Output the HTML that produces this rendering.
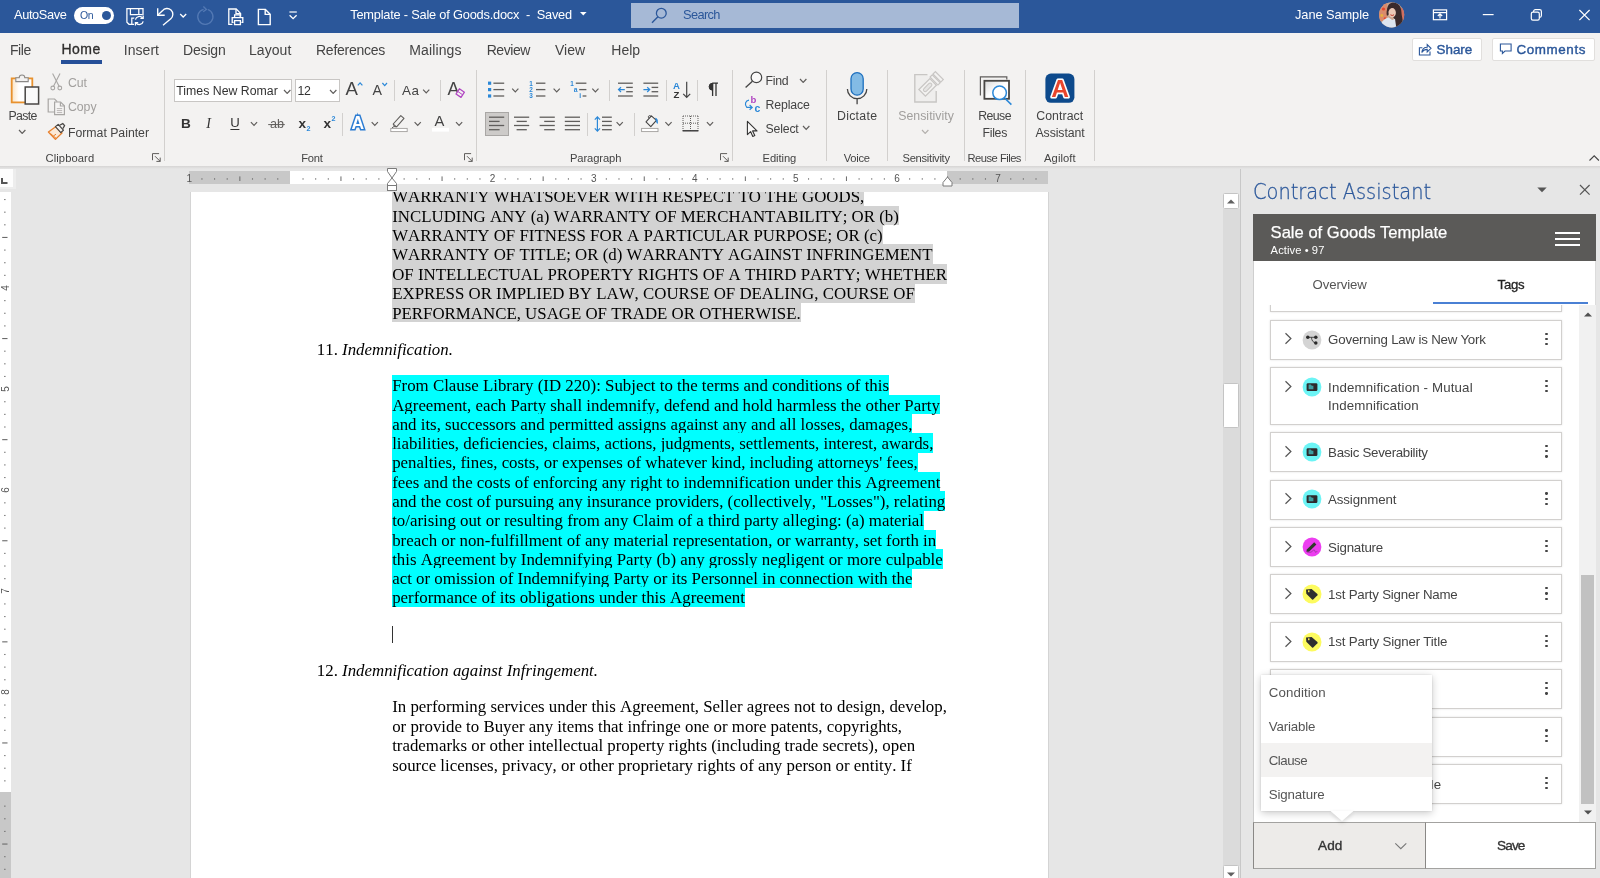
<!DOCTYPE html>
<html lang="en"><head><meta charset="utf-8"><title>Template - Sale of Goods.docx - Word</title>
<style>
html,body{margin:0;padding:0;overflow:hidden;}
body{width:1600px;height:878px;overflow:hidden;position:relative;background:#e6e6e6;font-family:"Liberation Sans",sans-serif;}
#root{position:absolute;left:0;top:0;width:1600px;height:878px;overflow:hidden;will-change:transform;}
.t{position:absolute;white-space:nowrap;line-height:1;}
.r{position:absolute;}
.ln{position:absolute;white-space:nowrap;font-family:"Liberation Serif",serif;font-size:16.85px;line-height:22px;height:19.4px;color:#000;font-kerning:none;font-variant-ligatures:none;}
.g{background:#d3d3d3;}
.c{background:#00ffff;}
</style></head>
<body>
<div id="root">
<!-- p_title -->
<div class="r" style="left:0.00px;top:0.00px;width:1600.00px;height:33.00px;background:#2b579a;"></div>
<div class="t" style="left:14.00px;top:8.96px;font-size:12.80px;color:#fff;letter-spacing:-0.376px;">AutoSave</div>
<div class="r" style="left:74.00px;top:6.50px;width:40.00px;height:17.00px;background:#fff;border-radius:9px;"></div>
<div class="t" style="left:80.00px;top:10.41px;font-size:10.50px;color:#2b579a;letter-spacing:-0.503px;">On</div>
<div class="r" style="left:101.50px;top:10.50px;width:9.00px;height:9.00px;background:#2b579a;border-radius:50%;"></div>
<div class="t" style="left:350.20px;top:8.96px;font-size:12.80px;color:#fff;letter-spacing:-0.205px;white-space:pre;">Template - Sale of Goods.docx  -  Saved</div>
<svg class="r" style="left:579.50px;top:12.20px;" width="7" height="4" viewBox="0 0 7 4"><path d="M0 0h6.6L3.3 3.6z" fill="#fff"/></svg>
<div class="r" style="left:631.00px;top:2.60px;width:387.50px;height:25.80px;background:#a6b9d6;"></div>
<svg class="r" style="left:651.00px;top:7.00px;" width="17" height="17" viewBox="0 0 17 17"><circle cx="10.3" cy="6.2" r="4.9" fill="none" stroke="#2b579a" stroke-width="1.3"/><path d="M6.9 9.8L1 15.8" stroke="#2b579a" stroke-width="1.4" fill="none"/></svg>
<div class="t" style="left:683.00px;top:9.06px;font-size:12.80px;color:#2b579a;letter-spacing:-0.626px;">Search</div>
<div class="t" style="left:1295.00px;top:8.96px;font-size:12.80px;color:#fff;letter-spacing:-0.065px;">Jane Sample</div>


<div class="r" style="left:0.00px;top:33.00px;width:1600.00px;height:132.50px;background:#f3f2f1;"></div>
<div class="r" style="left:0.00px;top:165.50px;width:1600.00px;height:3.00px;background:linear-gradient(#d6d5d4,#e6e6e6);"></div>
<div class="t" style="left:10.00px;top:42.55px;font-size:14.00px;color:#444;letter-spacing:-0.440px;">File</div>
<div class="t" style="left:61.40px;top:42.45px;font-size:14.00px;color:#2f2e2d;letter-spacing:0.513px;-webkit-text-stroke:0.32px #2f2e2d;">Home</div>
<div class="t" style="left:123.80px;top:42.55px;font-size:14.00px;color:#444;letter-spacing:0.031px;">Insert</div>
<div class="t" style="left:183.00px;top:42.55px;font-size:14.00px;color:#444;letter-spacing:-0.163px;">Design</div>
<div class="t" style="left:249.00px;top:42.55px;font-size:14.00px;color:#444;letter-spacing:0.061px;">Layout</div>
<div class="t" style="left:316.00px;top:42.55px;font-size:14.00px;color:#444;letter-spacing:-0.259px;">References</div>
<div class="t" style="left:409.20px;top:42.55px;font-size:14.00px;color:#444;letter-spacing:0.143px;">Mailings</div>
<div class="t" style="left:486.70px;top:42.55px;font-size:14.00px;color:#444;letter-spacing:-0.434px;">Review</div>
<div class="t" style="left:555.00px;top:42.55px;font-size:14.00px;color:#444;letter-spacing:-0.023px;">View</div>
<div class="t" style="left:611.30px;top:42.55px;font-size:14.00px;color:#444;letter-spacing:-0.024px;">Help</div>
<div class="r" style="left:61.20px;top:60.30px;width:40.60px;height:3.30px;background:#254f98;"></div>
<div class="r" style="left:1412.00px;top:38.00px;width:70.00px;height:23.00px;background:#fff;border:1px solid #e1dfdd;border-radius:2px;box-sizing:border-box;"></div>
<div class="r" style="left:1492.00px;top:38.00px;width:103.00px;height:23.00px;background:#fff;border:1px solid #e1dfdd;border-radius:2px;box-sizing:border-box;"></div>
<div class="t" style="left:1436.50px;top:42.96px;font-size:13.40px;color:#2b579a;letter-spacing:0.008px;-webkit-text-stroke:0.4px #2b579a;">Share</div>
<div class="t" style="left:1516.60px;top:42.96px;font-size:13.40px;color:#2b579a;letter-spacing:0.577px;-webkit-text-stroke:0.4px #2b579a;">Comments</div>
<svg class="r" style="left:0;top:0;" width="1600" height="66" viewBox="0 0 1600 66"><g fill="none" stroke="#fff" stroke-width="1.250"><path d="M134 24.300h-5l-2.100-2.100v-13.600h16.100v6.400"/><path d="M130.400 8.600v5.900h12.200"/><path d="M138.800 8.600v5.900"/><path d="M131.800 24.300v-6.300h2.600"/></g><circle cx="139.300" cy="20.500" r="5.300" fill="#2b579a"/><g fill="none" stroke="#fff" stroke-width="1.250"><path d="M135.400 19.600a4 4 0 0 1 7.200-1.400"/><path d="M143.200 15.600v2.800h-2.800"/><path d="M143.200 21.400a4 4 0 0 1-7.200 1.400"/><path d="M135.400 25.400v-2.800h2.800"/></g><g fill="none" stroke="#fff" stroke-width="1.350" stroke-linecap="butt"><path d="M157.700 8.200v7h7"/><path d="M157.900 15l4.500-4.200a5.800 5.800 0 1 1 8.400 7.900l-7.800 6.500"/></g><path d="M180.2 14l3 3l3-3" fill="none" stroke="#fff" stroke-width="1.3"/><g fill="none" stroke="#5379b4" stroke-width="1.3"><path d="M203.6 9.3a7.6 7.6 0 1 0 4.2 0.2"/><path d="M203.4 6.6l3 2.8l-3.2 2.4"/></g><g fill="none" stroke="#fff" stroke-width="1.3"><path d="M232.4 24.4h-3.6V9h7.4l4.4 4.4v3"/><path d="M236 9.2v4.4h4.4"/><path d="M233.6 22.4h-1.4v-4.8h10.6v4.8h-1.4"/><path d="M234.6 17.4v-2.6h5.6v2.6"/><path d="M234.6 20.6h5.8v4h-5.8z"/></g><g fill="none" stroke="#fff" stroke-width="1.4"><path d="M258.4 9.4h7l4.8 4.8v10.4h-11.8z"/><path d="M265.2 9.6v4.8h4.8"/></g><path d="M289.4 12h7.4" stroke="#fff" stroke-width="1.2" fill="none"/><path d="M289.6 15.2l3.5 3.5l3.5-3.5" fill="none" stroke="#fff" stroke-width="1.3"/><clipPath id="avc"><circle cx="1391.6" cy="14.8" r="12.6"/></clipPath><g clip-path="url(#avc)"><rect x="1378" y="1" width="28" height="28" fill="#c9a28c"/><rect x="1378" y="1" width="9" height="20" fill="#d98b6c"/><circle cx="1383.5" cy="9" r="1.6" fill="#e8452c"/><circle cx="1381.8" cy="15.5" r="1.4" fill="#e9b13c"/><circle cx="1385" cy="18.5" r="1.2" fill="#e8452c"/><rect x="1401" y="8" width="5" height="12" fill="#d06f60"/><path d="M1387.2 9.5c0.4-5.6 4-7.4 7.4-6.8c4.6 0.6 6.6 4.4 6.8 9c0.2 4.8 1.8 8.600 1.4 12c-2 3.600-6 4.400-9.400 4.200l0.800-9.400z" fill="#3b2a2b"/><path d="M1388 7.600c-1.600 2.200-1.800 6-1 8.400l2.200-2z" fill="#3b2a2b"/><ellipse cx="1392.200" cy="12.800" rx="3.700" ry="4.700" fill="#ecc8b6"/><path d="M1388.600 9.600c2-2.400 5.400-2.600 7.600-0.600l0.200-2.800l-6.400-0.400z" fill="#3b2a2b"/><path d="M1390.400 14.800q1.800 1.400 3.600 0" stroke="#c0392b" stroke-width="1" fill="none"/><path d="M1380 28c0.600-6 4-9.200 8.600-10.400l3.600 2.400l2.800-1.200l1.400 9.800z" fill="#dfe5ee"/></g><g fill="none" stroke="#fff" stroke-width="1.2"><rect x="1433.400" y="9.900" width="13.200" height="9.800"/><path d="M1433.400 12.600h13.200"/><path d="M1440 18.400v-4.200M1437.800 16l2.200-2.200l2.200 2.200"/><path d="M1482.800 14.600h10.800"/><rect x="1531.300" y="12.200" width="8" height="8" rx="1.600"/><path d="M1533.600 12v-0.600a1.800 1.800 0 0 1 1.800-1.800h4.200a1.800 1.800 0 0 1 1.800 1.800v4.200a1.800 1.800 0 0 1-1.800 1.800h-0.400"/><path d="M1579.400 10l10.200 10.200M1589.600 10l-10.200 10.200"/></g><g fill="none" stroke="#2b579a" stroke-width="1.1"><path d="M1422.400 47.800h-3v7.200h10.600v-3.600"/><path d="M1421.800 52.600c0.400-3.600 2.600-5.400 5.400-5.400v-2.600l3.800 3.700l-3.800 3.700v-2.600c-2.400-0.100-4.200 0.900-5.400 3.200z"/><path d="M1500.400 44h10.700v7h-6.100l-2.600 2.500v-2.500h-2z"/></g></svg>
<!-- p_ribbon -->
<div class="r" style="left:164.00px;top:70.00px;width:1.00px;height:91.00px;background:#d2d0ce;"></div>
<div class="r" style="left:475.50px;top:70.00px;width:1.00px;height:91.00px;background:#d2d0ce;"></div>
<div class="r" style="left:732.00px;top:70.00px;width:1.00px;height:91.00px;background:#d2d0ce;"></div>
<div class="r" style="left:825.50px;top:70.00px;width:1.00px;height:91.00px;background:#d2d0ce;"></div>
<div class="r" style="left:887.00px;top:70.00px;width:1.00px;height:91.00px;background:#d2d0ce;"></div>
<div class="r" style="left:964.00px;top:70.00px;width:1.00px;height:91.00px;background:#d2d0ce;"></div>
<div class="r" style="left:1024.50px;top:70.00px;width:1.00px;height:91.00px;background:#d2d0ce;"></div>
<div class="r" style="left:1094.00px;top:70.00px;width:1.00px;height:91.00px;background:#d2d0ce;"></div>
<div class="r" style="left:394.00px;top:80.00px;width:1.00px;height:21.00px;background:#d2d0ce;"></div>
<div class="r" style="left:440.00px;top:80.00px;width:1.00px;height:21.00px;background:#d2d0ce;"></div>
<div class="r" style="left:342.00px;top:113.00px;width:1.00px;height:23.00px;background:#d2d0ce;"></div>
<div class="r" style="left:609.00px;top:80.00px;width:1.00px;height:21.00px;background:#d2d0ce;"></div>
<div class="r" style="left:665.50px;top:80.00px;width:1.00px;height:21.00px;background:#d2d0ce;"></div>
<div class="r" style="left:697.00px;top:80.00px;width:1.00px;height:21.00px;background:#d2d0ce;"></div>
<div class="r" style="left:587.00px;top:113.00px;width:1.00px;height:23.00px;background:#d2d0ce;"></div>
<div class="r" style="left:633.50px;top:113.00px;width:1.00px;height:23.00px;background:#d2d0ce;"></div>
<div class="t" style="left:8.50px;top:110.09px;font-size:12.30px;color:#444;letter-spacing:-0.631px;">Paste</div>
<svg class="r" style="left:17.80px;top:128.80px;" width="8.4" height="5.4" viewBox="0 0 8.4 5.4"><path d="M1 1l3.20 3.40l3.20 -3.40" fill="none" stroke="#605e5c" stroke-width="1.20"/></svg>

<div class="t" style="left:68.00px;top:76.59px;font-size:12.30px;color:#a19f9d;letter-spacing:-0.114px;">Cut</div>

<div class="t" style="left:68.00px;top:100.79px;font-size:12.30px;color:#a19f9d;letter-spacing:-0.054px;">Copy</div>

<div class="t" style="left:68.00px;top:126.59px;font-size:12.30px;color:#444;letter-spacing:-0.025px;">Format Painter</div>
<div class="t" style="left:45.50px;top:152.52px;font-size:11.20px;color:#444;letter-spacing:0.095px;">Clipboard</div>

<div class="r" style="left:173.50px;top:78.70px;width:118.50px;height:23.50px;background:#fff;border:1px solid #c8c6c4;box-sizing:border-box;"></div>
<div class="r" style="left:294.60px;top:78.70px;width:45.20px;height:23.50px;background:#fff;border:1px solid #c8c6c4;box-sizing:border-box;"></div>
<div class="t" style="left:176.30px;top:85.09px;font-size:12.30px;color:#333;letter-spacing:0.008px;">Times New Romar</div>
<div class="t" style="left:297.50px;top:85.09px;font-size:12.30px;color:#333;letter-spacing:-0.441px;">12</div>
<svg class="r" style="left:282.50px;top:88.60px;" width="8.4" height="5.4" viewBox="0 0 8.4 5.4"><path d="M1 1l3.20 3.40l3.20 -3.40" fill="none" stroke="#605e5c" stroke-width="1.20"/></svg>
<svg class="r" style="left:329.00px;top:88.60px;" width="8.4" height="5.4" viewBox="0 0 8.4 5.4"><path d="M1 1l3.20 3.40l3.20 -3.40" fill="none" stroke="#605e5c" stroke-width="1.20"/></svg>


<div class="t" style="left:301.30px;top:152.52px;font-size:11.20px;color:#444;letter-spacing:-0.278px;">Font</div>

<div class="r" style="left:485.00px;top:112.00px;width:23.50px;height:24.30px;background:#cdcbc9;border:1px solid #a9a7a5;box-sizing:border-box;"></div>


<div class="t" style="left:570.00px;top:152.52px;font-size:11.20px;color:#444;letter-spacing:-0.112px;">Paragraph</div>


<div class="t" style="left:765.50px;top:74.59px;font-size:12.30px;color:#444;letter-spacing:-0.282px;">Find</div>
<svg class="r" style="left:799.10px;top:77.60px;" width="8.4" height="5.4" viewBox="0 0 8.4 5.4"><path d="M1 1l3.20 3.40l3.20 -3.40" fill="none" stroke="#605e5c" stroke-width="1.20"/></svg>
<div class="t" style="left:765.50px;top:99.09px;font-size:12.30px;color:#444;letter-spacing:-0.118px;">Replace</div>
<div class="t" style="left:765.50px;top:123.29px;font-size:12.30px;color:#444;letter-spacing:-0.181px;">Select</div>
<svg class="r" style="left:801.60px;top:125.30px;" width="8.4" height="5.4" viewBox="0 0 8.4 5.4"><path d="M1 1l3.20 3.40l3.20 -3.40" fill="none" stroke="#605e5c" stroke-width="1.20"/></svg>
<div class="t" style="left:762.50px;top:152.52px;font-size:11.20px;color:#444;letter-spacing:-0.064px;">Editing</div>

<div class="t" style="left:837.00px;top:110.09px;font-size:12.30px;color:#444;letter-spacing:0.288px;">Dictate</div>
<div class="t" style="left:843.70px;top:152.52px;font-size:11.20px;color:#444;letter-spacing:-0.280px;">Voice</div>

<div class="t" style="left:898.20px;top:110.09px;font-size:12.30px;color:#a19f9d;letter-spacing:0.039px;">Sensitivity</div>
<svg class="r" style="left:921.30px;top:128.80px;" width="8.4" height="5.4" viewBox="0 0 8.4 5.4"><path d="M1 1l3.20 3.40l3.20 -3.40" fill="none" stroke="#b3b0ad" stroke-width="1.20"/></svg>
<div class="t" style="left:902.50px;top:152.52px;font-size:11.20px;color:#444;letter-spacing:-0.283px;">Sensitivity</div>

<div class="t" style="left:978.20px;top:110.09px;font-size:12.30px;color:#444;letter-spacing:-0.551px;">Reuse</div>
<div class="t" style="left:982.50px;top:126.59px;font-size:12.30px;color:#444;letter-spacing:-0.294px;">Files</div>
<div class="t" style="left:967.50px;top:152.52px;font-size:11.20px;color:#444;letter-spacing:-0.512px;">Reuse Files</div>

<div class="t" style="left:1036.20px;top:110.09px;font-size:12.30px;color:#444;letter-spacing:0.077px;">Contract</div>
<div class="t" style="left:1035.50px;top:126.59px;font-size:12.30px;color:#444;letter-spacing:-0.100px;">Assistant</div>
<div class="t" style="left:1044.00px;top:152.52px;font-size:11.20px;color:#444;letter-spacing:0.096px;">Agiloft</div>
<svg class="r" style="left:1588.00px;top:154.00px;" width="12" height="8" viewBox="0 0 12 8"><path d="M1.5 6.5l4.7-4.7l4.7 4.7" fill="none" stroke="#444" stroke-width="1.1"/></svg>
<svg class="r" style="left:0;top:0;" width="1600" height="170" viewBox="0 0 1600 170"><defs><linearGradient id="pg" x1="0" y1="0" x2="1" y2="0"><stop offset="0" stop-color="#fbe3c2"/><stop offset="0.35" stop-color="#fff"/></linearGradient></defs><rect x="11.700" y="78.400" width="20.600" height="24" fill="url(#pg)" stroke="#e8912d" stroke-width="1.800"/><path d="M15.800 81.600v-3.800h3.400a2.800 2.800 0 0 1 5.600 0h3.400v3.800z" fill="#f3f2f1" stroke="#8a8886" stroke-width="1.100"/><rect x="25.200" y="87" width="13.400" height="17" fill="#fafafa" stroke="#484644" stroke-width="1.500"/><g fill="none" stroke="#a8a6a4" stroke-width="1.100"><path d="M52.600 73.600l6.600 12.800"/><path d="M60 73.600l-6.600 12.800"/><circle cx="52.800" cy="88" r="1.900"/><circle cx="59.800" cy="88" r="1.900"/></g><g fill="#f3f2f1" stroke="#a8a6a4" stroke-width="1.200"><path d="M54 112h-5.800v-13h6.400l2.600 2.600"/><path d="M54.600 102h6l3.800 3.800v8.800h-9.800z" fill="#f6f5f4"/><path d="M60.400 102.200v3.800h3.800" fill="none"/><path d="M56.800 108.600h5.400M56.800 110.600h5.400M56.800 112.600h5.400" stroke-width="0.800"/></g><path d="M48.400 132l7.600-5.600l6 6.600l-6.600 6.400z" fill="#fbe9d6" stroke="#e8812d" stroke-width="1.300" stroke-linejoin="round"/><path d="M50.600 133.600l5.800 5M53.400 136l2.600-1.800" stroke="#e8812d" stroke-width="1" fill="none"/><path d="M55.400 126.600l2.800-2.200l5.200 5.800l-2.600 2.400z" fill="#f3f2f1" stroke="#484644" stroke-width="1.200" stroke-linejoin="round"/><path d="M59.600 125.200l3.200-1.600l1.800 2l-1.800 3" fill="none" stroke="#484644" stroke-width="1.200"/><g fill="none" stroke="#605e5c" stroke-width="1"><path d="M152.50 160.20v-6.600h6.600"/><path d="M155.00 156.20l5.200 5.200"/><path d="M160.20 157.60v3.800h-3.800"/></g><text x="345.60" y="95.20" font-family="'Liberation Sans',sans-serif" font-size="18.60" fill="#444" text-anchor="start">A</text><path d="M357.800 85.400l2.300-2.600l2.300 2.600" fill="none" stroke="#2b88d8" stroke-width="1.200"/><text x="372.60" y="95.20" font-family="'Liberation Sans',sans-serif" font-size="14.20" fill="#444" text-anchor="start">A</text><path d="M382.400 83l2.300 2.600l2.300-2.600" fill="none" stroke="#2b88d8" stroke-width="1.200"/><text x="402.00" y="95.20" font-family="'Liberation Sans',sans-serif" font-size="13.40" fill="#444" text-anchor="start" letter-spacing="0.6">Aa</text><path d="M423.10 89.70l3.10 3.20l3.10 -3.20" fill="none" stroke="#605e5c" stroke-width="1.20"/><text x="447.40" y="94.80" font-family="'Liberation Sans',sans-serif" font-size="17.80" fill="#444" text-anchor="start">A</text><path d="M459.400 88.800l5 3.400l-3.400 5.200l-5-3.400z" fill="#f3f2f1" stroke="#b146c2" stroke-width="1.300" stroke-linejoin="round"/><path d="M457.400 91.200l5 3.400" stroke="#b146c2" stroke-width="1" fill="none"/><text x="181.00" y="127.50" font-family="'Liberation Sans',sans-serif" font-size="13.60" fill="#333" font-weight="700" text-anchor="start">B</text><text x="206.20" y="127.50" font-family="'Liberation Serif',serif" font-size="14.00" fill="#333" font-style="italic" text-anchor="start">I</text><text x="230.20" y="127.30" font-family="'Liberation Sans',sans-serif" font-size="13.20" fill="#333" text-anchor="start">U</text><path d="M230.400 129.500h9" stroke="#333" stroke-width="1" fill="none"/><path d="M250.90 122.20l3.10 3.20l3.10 -3.20" fill="none" stroke="#605e5c" stroke-width="1.20"/><text x="270.00" y="127.50" font-family="'Liberation Sans',sans-serif" font-size="12.60" fill="#605e5c" text-anchor="start">ab</text><path d="M268.200 124.600h16.600" stroke="#605e5c" stroke-width="1" fill="none"/><text x="298.60" y="127.50" font-family="'Liberation Sans',sans-serif" font-size="13.60" fill="#333" font-weight="700" text-anchor="start">x</text><text x="306.40" y="131.00" font-family="'Liberation Sans',sans-serif" font-size="7.20" fill="#2b88d8" font-weight="700" text-anchor="start">2</text><text x="323.40" y="127.50" font-family="'Liberation Sans',sans-serif" font-size="13.60" fill="#333" font-weight="700" text-anchor="start">x</text><text x="331.40" y="121.40" font-family="'Liberation Sans',sans-serif" font-size="7.20" fill="#2b88d8" font-weight="700" text-anchor="start">2</text><text x="351.400" y="129" font-family="'Liberation Sans',sans-serif" font-size="17.500" font-weight="700" fill="#fff" stroke="#2b7cd3" stroke-width="3" paint-order="stroke">A</text><path d="M371.70 122.20l3.10 3.20l3.10 -3.20" fill="none" stroke="#605e5c" stroke-width="1.20"/><path d="M394.600 126.600l-1.400-2.600l7.600-8.400l3.200 2.800l-7.200 8.200z" fill="#f3f2f1" stroke="#605e5c" stroke-width="1.100" stroke-linejoin="round"/><path d="M393.200 124l3.400 2.800M392 127.800l2.200-1.400" stroke="#605e5c" stroke-width="1" fill="none"/><rect x="390.800" y="128.400" width="16.400" height="3.200" fill="#fff" stroke="#a19f9d" stroke-width="0.900"/><path d="M414.60 122.20l3.10 3.20l3.10 -3.20" fill="none" stroke="#605e5c" stroke-width="1.20"/><text x="434.60" y="126.40" font-family="'Liberation Sans',sans-serif" font-size="14.80" fill="#444" text-anchor="start">A</text><rect x="432" y="127.800" width="17" height="3.800" fill="#fff"/><path d="M456.00 122.20l3.10 3.20l3.10 -3.20" fill="none" stroke="#605e5c" stroke-width="1.20"/><g fill="none" stroke="#605e5c" stroke-width="1"><path d="M464.50 160.20v-6.600h6.600"/><path d="M467.00 156.20l5.200 5.200"/><path d="M472.20 157.60v3.800h-3.800"/></g><rect x="488" y="81.60" width="3.200" height="3.200" fill="#2b88d8"/><path d="M493.40 83.20H504.20" stroke="#605e5c" stroke-width="1.30" fill="none"/><rect x="488" y="88.00" width="3.200" height="3.200" fill="#2b88d8"/><path d="M493.40 89.60H504.20" stroke="#605e5c" stroke-width="1.30" fill="none"/><rect x="488" y="94.40" width="3.200" height="3.200" fill="#2b88d8"/><path d="M493.40 96.00H504.20" stroke="#605e5c" stroke-width="1.30" fill="none"/><path d="M512.20 88.70l3.10 3.20l3.10 -3.20" fill="none" stroke="#605e5c" stroke-width="1.20"/><text x="529.20" y="85.50" font-family="'Liberation Sans',sans-serif" font-size="6.40" fill="#2b88d8" font-weight="700" text-anchor="start">1</text><path d="M536.00 83.20H545.40" stroke="#605e5c" stroke-width="1.30" fill="none"/><text x="529.20" y="91.90" font-family="'Liberation Sans',sans-serif" font-size="6.40" fill="#2b88d8" font-weight="700" text-anchor="start">2</text><path d="M536.00 89.60H545.40" stroke="#605e5c" stroke-width="1.30" fill="none"/><text x="529.20" y="98.30" font-family="'Liberation Sans',sans-serif" font-size="6.40" fill="#2b88d8" font-weight="700" text-anchor="start">3</text><path d="M536.00 96.00H545.40" stroke="#605e5c" stroke-width="1.30" fill="none"/><path d="M553.60 88.70l3.10 3.20l3.10 -3.20" fill="none" stroke="#605e5c" stroke-width="1.20"/><text x="570.20" y="85.50" font-family="'Liberation Sans',sans-serif" font-size="6.40" fill="#2b88d8" font-weight="700" text-anchor="start">1</text><path d="M575.80 83.20H586.40" stroke="#605e5c" stroke-width="1.30" fill="none"/><text x="573.80" y="91.80" font-family="'Liberation Sans',sans-serif" font-size="6.80" fill="#2b88d8" font-weight="700" text-anchor="start">a</text><path d="M579.20 89.60H586.40" stroke="#605e5c" stroke-width="1.30" fill="none"/><text x="579.20" y="98.30" font-family="'Liberation Sans',sans-serif" font-size="6.80" fill="#2b88d8" font-weight="700" text-anchor="start">i</text><path d="M582.60 96.00H586.40" stroke="#605e5c" stroke-width="1.30" fill="none"/><path d="M592.30 88.70l3.10 3.20l3.10 -3.20" fill="none" stroke="#605e5c" stroke-width="1.20"/><path d="M618.00 83.20H632.80" stroke="#605e5c" stroke-width="1.30" fill="none"/><path d="M618.00 96.00H632.80" stroke="#605e5c" stroke-width="1.30" fill="none"/><path d="M626.20 87.40H632.80" stroke="#605e5c" stroke-width="1.30" fill="none"/><path d="M626.20 91.70H632.80" stroke="#605e5c" stroke-width="1.30" fill="none"/><path d="M624.800 89.600h-6.200M621 87.200l-2.500 2.400l2.500 2.400" stroke="#2b88d8" stroke-width="1.200" fill="none"/><path d="M643.40 83.20H658.20" stroke="#605e5c" stroke-width="1.30" fill="none"/><path d="M643.40 96.00H658.20" stroke="#605e5c" stroke-width="1.30" fill="none"/><path d="M651.60 87.40H658.20" stroke="#605e5c" stroke-width="1.30" fill="none"/><path d="M651.60 91.70H658.20" stroke="#605e5c" stroke-width="1.30" fill="none"/><path d="M643.400 89.600h6.200M647.200 87.200l2.500 2.400l-2.500 2.400" stroke="#2b88d8" stroke-width="1.200" fill="none"/><text x="673.00" y="88.80" font-family="'Liberation Sans',sans-serif" font-size="9.60" fill="#2b88d8" font-weight="700" text-anchor="start">A</text><text x="673.40" y="98.00" font-family="'Liberation Sans',sans-serif" font-size="9.60" fill="#333" font-weight="700" text-anchor="start">Z</text><path d="M686.700 81.800v15.400M683.200 93.800l3.500 3.600l3.500-3.600" stroke="#444" stroke-width="1.200" fill="none"/><path d="M712.400 83.200h5.600M712.600 83.200v12.800M716 83.200v12.800" stroke="#333" stroke-width="1.300" fill="none"/><path d="M712.600 83.200a3.500 3.500 0 0 0 0 7z" fill="#333" stroke="#333" stroke-width="1"/><path d="M489.00 117.20H504.20" stroke="#605e5c" stroke-width="1.30" fill="none"/><path d="M514.00 117.20H529.20" stroke="#605e5c" stroke-width="1.30" fill="none"/><path d="M539.60 117.20H554.80" stroke="#605e5c" stroke-width="1.30" fill="none"/><path d="M564.80 117.20H580.00" stroke="#605e5c" stroke-width="1.30" fill="none"/><path d="M602.00 117.20H611.80" stroke="#605e5c" stroke-width="1.30" fill="none"/><path d="M489.00 121.40H499.60" stroke="#605e5c" stroke-width="1.30" fill="none"/><path d="M516.60 121.40H526.80" stroke="#605e5c" stroke-width="1.30" fill="none"/><path d="M544.20 121.40H554.80" stroke="#605e5c" stroke-width="1.30" fill="none"/><path d="M564.80 121.40H580.00" stroke="#605e5c" stroke-width="1.30" fill="none"/><path d="M602.00 121.40H611.80" stroke="#605e5c" stroke-width="1.30" fill="none"/><path d="M489.00 125.50H504.20" stroke="#605e5c" stroke-width="1.30" fill="none"/><path d="M514.00 125.50H529.20" stroke="#605e5c" stroke-width="1.30" fill="none"/><path d="M539.60 125.50H554.80" stroke="#605e5c" stroke-width="1.30" fill="none"/><path d="M564.80 125.50H580.00" stroke="#605e5c" stroke-width="1.30" fill="none"/><path d="M602.00 125.50H611.80" stroke="#605e5c" stroke-width="1.30" fill="none"/><path d="M489.00 129.70H499.60" stroke="#605e5c" stroke-width="1.30" fill="none"/><path d="M516.60 129.70H526.80" stroke="#605e5c" stroke-width="1.30" fill="none"/><path d="M544.20 129.70H554.80" stroke="#605e5c" stroke-width="1.30" fill="none"/><path d="M564.80 129.70H580.00" stroke="#605e5c" stroke-width="1.30" fill="none"/><path d="M602.00 129.70H611.80" stroke="#605e5c" stroke-width="1.30" fill="none"/><path d="M597.400 117v14M594.800 119.600l2.600-2.700l2.600 2.700M594.800 128.400l2.600 2.700l2.600-2.700" stroke="#2b88d8" stroke-width="1.200" fill="none"/><path d="M616.60 122.20l3.10 3.20l3.10 -3.20" fill="none" stroke="#605e5c" stroke-width="1.20"/><path d="M646 121.800l5.400-6l5 4.600l-5.600 6.200z" fill="#f3f2f1" stroke="#444" stroke-width="1.100" stroke-linejoin="round"/><path d="M651 116.400c-1.800-1.800-3.400 0-2.200 1.800" fill="none" stroke="#444" stroke-width="1"/><path d="M655.600 118.200c1.600 0.400 2.200 2.200 1.800 5.200c-1-1.200-1.200-3-1.800-5.200z" fill="#2b88d8" stroke="#2b88d8" stroke-width="0.800"/><rect x="641.600" y="128.400" width="16.400" height="3.200" fill="#fff" stroke="#a19f9d" stroke-width="0.900"/><path d="M665.40 122.20l3.10 3.20l3.10 -3.20" fill="none" stroke="#605e5c" stroke-width="1.20"/><g fill="none" stroke="#605e5c" stroke-width="1" stroke-dasharray="1 1"><path d="M683 116h15M683 116v14.600M698 116v14.600M690.500 116v14.600M683 123.200h15"/></g><path d="M682.60 130.80H698.40" stroke="#333" stroke-width="1.40" fill="none"/><path d="M706.90 122.20l3.10 3.20l3.10 -3.20" fill="none" stroke="#605e5c" stroke-width="1.20"/><g fill="none" stroke="#605e5c" stroke-width="1"><path d="M720.50 160.20v-6.600h6.600"/><path d="M723.00 156.20l5.200 5.200"/><path d="M728.20 157.60v3.800h-3.800"/></g><circle cx="756.400" cy="77.400" r="5.300" fill="#faf9f8" stroke="#444" stroke-width="1.200"/><path d="M752.400 81.200l-6.800 6.200" stroke="#444" stroke-width="1.300" fill="none"/><text x="750.40" y="103.40" font-family="'Liberation Sans',sans-serif" font-size="9.60" fill="#b146c2" font-weight="700" text-anchor="start">b</text><text x="754.60" y="112.40" font-family="'Liberation Sans',sans-serif" font-size="10.40" fill="#2b88d8" font-weight="700" text-anchor="start">c</text><path d="M749 100.200c-3.600 0.400-4.800 4.200-2.200 7.200h5.200M749.600 105l2.600 2.400l-2.600 2.400" fill="none" stroke="#2b88d8" stroke-width="1.200"/><path d="M747.400 121.400v13.200l3.200-3l2.200 4.800l2-0.900l-2.200-4.600h4.400z" fill="#faf9f8" stroke="#333" stroke-width="1.100" stroke-linejoin="round"/><rect x="851" y="72.600" width="12.200" height="22.600" rx="6.100" fill="#83bbe5" stroke="#1e70bf" stroke-width="1.300"/><path d="M847.400 89a9.600 9.600 0 0 0 19.400 0M857.100 98.600v5.600" fill="none" stroke="#444" stroke-width="1.300"/><path d="M927.400 74.600h-12.600v27.400h21.400v-11" fill="#efeeed" stroke="#c8c6c4" stroke-width="1.400"/><g transform="rotate(-45 931 84)"><rect x="918.500" y="79.400" width="15.500" height="9.200" fill="#f3f2f1" stroke="#c8c6c4" stroke-width="1.300"/><rect x="921" y="82.200" width="10.500" height="3.600" rx="1.800" fill="#e6e5e4" stroke="#c8c6c4" stroke-width="1"/><rect x="935.200" y="78.400" width="3.200" height="11.200" fill="#f3f2f1" stroke="#c8c6c4" stroke-width="1.200"/><rect x="939.400" y="78.400" width="3.400" height="11.200" fill="#f3f2f1" stroke="#c8c6c4" stroke-width="1.200"/></g><path d="M980.400 95.600v-18.800h26.400v2.600" fill="none" stroke="#605e5c" stroke-width="1.200"/><defs><linearGradient id="rg" x1="0" y1="0" x2="1" y2="1"><stop offset="0" stop-color="#d8d8d8"/><stop offset="0.5" stop-color="#fff"/></linearGradient></defs><rect x="984.400" y="80.800" width="24.600" height="18" fill="url(#rg)" stroke="#484644" stroke-width="1.800"/><path d="M1004.800 98.200l6.600 6.400" stroke="#2b88d8" stroke-width="1.600" fill="none"/><circle cx="999.600" cy="92.800" r="6.800" fill="#fff" stroke="#2b88d8" stroke-width="1.500"/><rect x="1045.400" y="73.600" width="29" height="29.200" rx="5.500" fill="#0d4a8c"/><text x="1060" y="97.200" text-anchor="middle" font-family="'Liberation Sans',sans-serif" font-size="24.500" font-weight="700" fill="#e8452c" stroke="#fff" stroke-width="3.200" paint-order="stroke" stroke-linejoin="round">A</text></svg>
<!-- p_doc -->
<div class="r" style="left:188.70px;top:170.60px;width:859.60px;height:13.80px;background:#c8c8c8;"></div>
<div class="r" style="left:290.40px;top:170.60px;width:656.40px;height:13.80px;background:#fff;"></div>
<svg class="r" style="left:188.00px;top:170.60px;" width="862" height="14" viewBox="0 0 862 14"><rect x="13.39" y="7.3" width="1.1" height="1.3" fill="#6a6a6a"/><rect x="26.02" y="7.3" width="1.1" height="1.3" fill="#6a6a6a"/><rect x="38.66" y="7.3" width="1.1" height="1.3" fill="#6a6a6a"/><rect x="51.35" y="5.4" width="1" height="4.6" fill="#6a6a6a"/><rect x="63.94" y="7.3" width="1.1" height="1.3" fill="#6a6a6a"/><rect x="76.58" y="7.3" width="1.1" height="1.3" fill="#6a6a6a"/><rect x="89.21" y="7.3" width="1.1" height="1.3" fill="#6a6a6a"/><rect x="114.49" y="7.3" width="1.1" height="1.3" fill="#6a6a6a"/><rect x="127.12" y="7.3" width="1.1" height="1.3" fill="#6a6a6a"/><rect x="139.76" y="7.3" width="1.1" height="1.3" fill="#6a6a6a"/><rect x="152.45" y="5.4" width="1" height="4.6" fill="#6a6a6a"/><rect x="165.04" y="7.3" width="1.1" height="1.3" fill="#6a6a6a"/><rect x="177.67" y="7.3" width="1.1" height="1.3" fill="#6a6a6a"/><rect x="190.31" y="7.3" width="1.1" height="1.3" fill="#6a6a6a"/><rect x="215.59" y="7.3" width="1.1" height="1.3" fill="#6a6a6a"/><rect x="228.22" y="7.3" width="1.1" height="1.3" fill="#6a6a6a"/><rect x="240.86" y="7.3" width="1.1" height="1.3" fill="#6a6a6a"/><rect x="253.55" y="5.4" width="1" height="4.6" fill="#6a6a6a"/><rect x="266.14" y="7.3" width="1.1" height="1.3" fill="#6a6a6a"/><rect x="278.77" y="7.3" width="1.1" height="1.3" fill="#6a6a6a"/><rect x="291.41" y="7.3" width="1.1" height="1.3" fill="#6a6a6a"/><rect x="316.69" y="7.3" width="1.1" height="1.3" fill="#6a6a6a"/><rect x="329.32" y="7.3" width="1.1" height="1.3" fill="#6a6a6a"/><rect x="341.96" y="7.3" width="1.1" height="1.3" fill="#6a6a6a"/><rect x="354.65" y="5.4" width="1" height="4.6" fill="#6a6a6a"/><rect x="367.24" y="7.3" width="1.1" height="1.3" fill="#6a6a6a"/><rect x="379.87" y="7.3" width="1.1" height="1.3" fill="#6a6a6a"/><rect x="392.51" y="7.3" width="1.1" height="1.3" fill="#6a6a6a"/><rect x="417.79" y="7.3" width="1.1" height="1.3" fill="#6a6a6a"/><rect x="430.42" y="7.3" width="1.1" height="1.3" fill="#6a6a6a"/><rect x="443.06" y="7.3" width="1.1" height="1.3" fill="#6a6a6a"/><rect x="455.75" y="5.4" width="1" height="4.6" fill="#6a6a6a"/><rect x="468.34" y="7.3" width="1.1" height="1.3" fill="#6a6a6a"/><rect x="480.97" y="7.3" width="1.1" height="1.3" fill="#6a6a6a"/><rect x="493.61" y="7.3" width="1.1" height="1.3" fill="#6a6a6a"/><rect x="518.89" y="7.3" width="1.1" height="1.3" fill="#6a6a6a"/><rect x="531.52" y="7.3" width="1.1" height="1.3" fill="#6a6a6a"/><rect x="544.16" y="7.3" width="1.1" height="1.3" fill="#6a6a6a"/><rect x="556.85" y="5.4" width="1" height="4.6" fill="#6a6a6a"/><rect x="569.44" y="7.3" width="1.1" height="1.3" fill="#6a6a6a"/><rect x="582.08" y="7.3" width="1.1" height="1.3" fill="#6a6a6a"/><rect x="594.71" y="7.3" width="1.1" height="1.3" fill="#6a6a6a"/><rect x="619.99" y="7.3" width="1.1" height="1.3" fill="#6a6a6a"/><rect x="632.62" y="7.3" width="1.1" height="1.3" fill="#6a6a6a"/><rect x="645.26" y="7.3" width="1.1" height="1.3" fill="#6a6a6a"/><rect x="657.95" y="5.4" width="1" height="4.6" fill="#6a6a6a"/><rect x="670.54" y="7.3" width="1.1" height="1.3" fill="#6a6a6a"/><rect x="683.17" y="7.3" width="1.1" height="1.3" fill="#6a6a6a"/><rect x="695.81" y="7.3" width="1.1" height="1.3" fill="#6a6a6a"/><rect x="721.09" y="7.3" width="1.1" height="1.3" fill="#6a6a6a"/><rect x="733.73" y="7.3" width="1.1" height="1.3" fill="#6a6a6a"/><rect x="746.36" y="7.3" width="1.1" height="1.3" fill="#6a6a6a"/><rect x="759.05" y="5.4" width="1" height="4.6" fill="#6a6a6a"/><rect x="771.64" y="7.3" width="1.1" height="1.3" fill="#6a6a6a"/><rect x="784.27" y="7.3" width="1.1" height="1.3" fill="#6a6a6a"/><rect x="796.91" y="7.3" width="1.1" height="1.3" fill="#6a6a6a"/><rect x="822.19" y="7.3" width="1.1" height="1.3" fill="#6a6a6a"/><rect x="834.82" y="7.3" width="1.1" height="1.3" fill="#6a6a6a"/><rect x="847.46" y="7.3" width="1.1" height="1.3" fill="#6a6a6a"/></svg>
<div class="t" style="left:186.50px;top:173.94px;font-size:10.00px;color:#555;">1</div>
<div class="t" style="left:489.80px;top:173.94px;font-size:10.00px;color:#555;">2</div>
<div class="t" style="left:590.90px;top:173.94px;font-size:10.00px;color:#555;">3</div>
<div class="t" style="left:692.00px;top:173.94px;font-size:10.00px;color:#555;">4</div>
<div class="t" style="left:793.10px;top:173.94px;font-size:10.00px;color:#555;">5</div>
<div class="t" style="left:894.20px;top:173.94px;font-size:10.00px;color:#555;">6</div>
<div class="t" style="left:995.30px;top:173.94px;font-size:10.00px;color:#555;">7</div>
<svg class="r" style="left:387.00px;top:168.20px;" width="10" height="23.5" viewBox="0 0 10 23.5"><path d="M0.5 0.5h9v3l-4.5 6.5l-4.5 -6.5z" fill="#fff" stroke="#7a7a7a" stroke-width="1"/><path d="M5 10l4.5 5.5v2h-9v-2z" fill="#fff" stroke="#7a7a7a" stroke-width="1"/><rect x="0.5" y="17.5" width="9" height="5" fill="#fff" stroke="#7a7a7a" stroke-width="1"/></svg>
<svg class="r" style="left:941.80px;top:175.50px;" width="11" height="11" viewBox="0 0 11 11"><path d="M5.5 1l4.5 5.5v3.5h-9v-3.5z" fill="#fff" stroke="#7a7a7a" stroke-width="1"/></svg>
<div class="r" style="left:0.00px;top:168.50px;width:15.50px;height:20.50px;background:#ededed;"></div>
<div class="r" style="left:0.00px;top:169.40px;width:12.50px;height:17.50px;background:#fdfdfd;"></div>
<svg class="r" style="left:0.00px;top:176.50px;" width="9" height="8" viewBox="0 0 9 8"><path d="M2 1v5h5.5" fill="none" stroke="#555" stroke-width="2"/></svg>
<div class="r" style="left:0.00px;top:191.90px;width:10.70px;height:600.00px;background:#fff;"></div>
<div class="r" style="left:0.00px;top:791.90px;width:10.70px;height:90.00px;background:#c8c8c8;"></div>
<svg class="r" style="left:0.00px;top:191.00px;" width="11" height="687" viewBox="0 0 11 687"><rect x="4.2" y="7.99" width="1.3" height="1.1" fill="#6a6a6a"/><rect x="4.2" y="20.63" width="1.3" height="1.1" fill="#6a6a6a"/><rect x="4.2" y="33.26" width="1.3" height="1.1" fill="#6a6a6a"/><rect x="2.2" y="45.90" width="5.3" height="1.1" fill="#6a6a6a"/><rect x="4.2" y="58.54" width="1.3" height="1.1" fill="#6a6a6a"/><rect x="4.2" y="71.18" width="1.3" height="1.1" fill="#6a6a6a"/><rect x="4.2" y="83.81" width="1.3" height="1.1" fill="#6a6a6a"/><rect x="4.2" y="109.09" width="1.3" height="1.1" fill="#6a6a6a"/><rect x="4.2" y="121.72" width="1.3" height="1.1" fill="#6a6a6a"/><rect x="4.2" y="134.36" width="1.3" height="1.1" fill="#6a6a6a"/><rect x="2.2" y="147.00" width="5.3" height="1.1" fill="#6a6a6a"/><rect x="4.2" y="159.64" width="1.3" height="1.1" fill="#6a6a6a"/><rect x="4.2" y="172.27" width="1.3" height="1.1" fill="#6a6a6a"/><rect x="4.2" y="184.91" width="1.3" height="1.1" fill="#6a6a6a"/><rect x="4.2" y="210.19" width="1.3" height="1.1" fill="#6a6a6a"/><rect x="4.2" y="222.82" width="1.3" height="1.1" fill="#6a6a6a"/><rect x="4.2" y="235.46" width="1.3" height="1.1" fill="#6a6a6a"/><rect x="2.2" y="248.10" width="5.3" height="1.1" fill="#6a6a6a"/><rect x="4.2" y="260.74" width="1.3" height="1.1" fill="#6a6a6a"/><rect x="4.2" y="273.37" width="1.3" height="1.1" fill="#6a6a6a"/><rect x="4.2" y="286.01" width="1.3" height="1.1" fill="#6a6a6a"/><rect x="4.2" y="311.29" width="1.3" height="1.1" fill="#6a6a6a"/><rect x="4.2" y="323.93" width="1.3" height="1.1" fill="#6a6a6a"/><rect x="4.2" y="336.56" width="1.3" height="1.1" fill="#6a6a6a"/><rect x="2.2" y="349.20" width="5.3" height="1.1" fill="#6a6a6a"/><rect x="4.2" y="361.84" width="1.3" height="1.1" fill="#6a6a6a"/><rect x="4.2" y="374.47" width="1.3" height="1.1" fill="#6a6a6a"/><rect x="4.2" y="387.11" width="1.3" height="1.1" fill="#6a6a6a"/><rect x="4.2" y="412.39" width="1.3" height="1.1" fill="#6a6a6a"/><rect x="4.2" y="425.03" width="1.3" height="1.1" fill="#6a6a6a"/><rect x="4.2" y="437.66" width="1.3" height="1.1" fill="#6a6a6a"/><rect x="2.2" y="450.30" width="5.3" height="1.1" fill="#6a6a6a"/><rect x="4.2" y="462.94" width="1.3" height="1.1" fill="#6a6a6a"/><rect x="4.2" y="475.57" width="1.3" height="1.1" fill="#6a6a6a"/><rect x="4.2" y="488.21" width="1.3" height="1.1" fill="#6a6a6a"/><rect x="4.2" y="513.49" width="1.3" height="1.1" fill="#6a6a6a"/><rect x="4.2" y="526.12" width="1.3" height="1.1" fill="#6a6a6a"/><rect x="4.2" y="538.76" width="1.3" height="1.1" fill="#6a6a6a"/><rect x="2.2" y="551.40" width="5.3" height="1.1" fill="#6a6a6a"/><rect x="4.2" y="564.04" width="1.3" height="1.1" fill="#6a6a6a"/><rect x="4.2" y="576.67" width="1.3" height="1.1" fill="#6a6a6a"/><rect x="4.2" y="589.31" width="1.3" height="1.1" fill="#6a6a6a"/><rect x="4.2" y="614.59" width="1.3" height="1.1" fill="#6a6a6a"/><rect x="4.2" y="627.23" width="1.3" height="1.1" fill="#6a6a6a"/><rect x="4.2" y="639.86" width="1.3" height="1.1" fill="#6a6a6a"/><rect x="2.2" y="652.50" width="5.3" height="1.1" fill="#6a6a6a"/><rect x="4.2" y="665.14" width="1.3" height="1.1" fill="#6a6a6a"/><rect x="4.2" y="677.77" width="1.3" height="1.1" fill="#6a6a6a"/></svg>
<div class="t" style="left:0.8px;top:283.00px;width:10px;height:10px;font-size:10px;color:#555;transform:rotate(-90deg);text-align:center;">4</div>
<div class="t" style="left:0.8px;top:384.10px;width:10px;height:10px;font-size:10px;color:#555;transform:rotate(-90deg);text-align:center;">5</div>
<div class="t" style="left:0.8px;top:485.20px;width:10px;height:10px;font-size:10px;color:#555;transform:rotate(-90deg);text-align:center;">6</div>
<div class="t" style="left:0.8px;top:586.30px;width:10px;height:10px;font-size:10px;color:#555;transform:rotate(-90deg);text-align:center;">7</div>
<div class="t" style="left:0.8px;top:687.40px;width:10px;height:10px;font-size:10px;color:#555;transform:rotate(-90deg);text-align:center;">8</div>
<div class="r" style="left:190.00px;top:191.50px;width:859.00px;height:690.00px;background:#d4d4d4;"></div>
<div class="r" id="page" style="left:190.7px;top:191.5px;width:857.5px;height:686.5px;background:#fff;overflow:hidden;">
<div class="ln g" style="left:201.50px;top:-5.25px;line-height:21.83px;height:19.85px;">WARRANTY WHATSOEVER WITH RESPECT TO THE GOODS,</div>
<div class="ln g" style="left:201.50px;top:14.15px;line-height:21.83px;height:19.85px;">INCLUDING ANY (a) WARRANTY OF MERCHANTABILITY; OR (b)</div>
<div class="ln g" style="left:201.50px;top:33.55px;line-height:21.83px;height:19.85px;">WARRANTY OF FITNESS FOR A PARTICULAR PURPOSE; OR (c)</div>
<div class="ln g" style="left:201.50px;top:52.95px;line-height:21.83px;height:19.85px;">WARRANTY OF TITLE; OR (d) WARRANTY AGAINST INFRINGEMENT</div>
<div class="ln g" style="left:201.50px;top:72.35px;line-height:21.83px;height:19.85px;">OF INTELLECTUAL PROPERTY RIGHTS OF A THIRD PARTY; WHETHER</div>
<div class="ln g" style="left:201.50px;top:91.75px;line-height:21.83px;height:19.85px;">EXPRESS OR IMPLIED BY LAW, COURSE OF DEALING, COURSE OF</div>
<div class="ln g" style="left:201.50px;top:111.15px;line-height:21.83px;height:19.40px;">PERFORMANCE, USAGE OF TRADE OR OTHERWISE.</div>
<div class="ln" style="left:126.10px;top:147.55px;line-height:21.83px;height:19.40px;">11. <i>Indemnification.</i></div>
<div class="ln c" style="left:201.50px;top:183.85px;line-height:21.03px;height:19.73px;">From Clause Library (ID 220): Subject to the terms and conditions of this</div>
<div class="ln c" style="left:201.50px;top:203.14px;line-height:21.03px;height:19.73px;">Agreement, each Party shall indemnify, defend and hold harmless the other Party</div>
<div class="ln c" style="left:201.50px;top:222.42px;line-height:21.03px;height:19.73px;">and its, successors and permitted assigns against any and all losses, damages,</div>
<div class="ln c" style="left:201.50px;top:241.71px;line-height:21.03px;height:19.73px;">liabilities, deficiencies, claims, actions, judgments, settlements, interest, awards,</div>
<div class="ln c" style="left:201.50px;top:260.99px;line-height:21.03px;height:19.73px;">penalties, fines, costs, or expenses of whatever kind, including attorneys' fees,</div>
<div class="ln c" style="left:201.50px;top:280.28px;line-height:21.03px;height:19.73px;">fees and the costs of enforcing any right to indemnification under this Agreement</div>
<div class="ln c" style="left:201.50px;top:299.56px;line-height:21.03px;height:19.73px;">and the cost of pursuing any insurance providers, (collectively, "Losses"), relating</div>
<div class="ln c" style="left:201.50px;top:318.85px;line-height:21.03px;height:19.73px;">to/arising out or resulting from any Claim of a third party alleging: (a) material</div>
<div class="ln c" style="left:201.50px;top:338.13px;line-height:21.03px;height:19.73px;">breach or non-fulfillment of any material representation, or warranty, set forth in</div>
<div class="ln c" style="left:201.50px;top:357.41px;line-height:21.03px;height:19.73px;">this Agreement by Indemnifying Party (b) any grossly negligent or more culpable</div>
<div class="ln c" style="left:201.50px;top:376.70px;line-height:21.03px;height:19.73px;">act or omission of Indemnifying Party or its Personnel in connection with the</div>
<div class="ln c" style="left:201.50px;top:395.98px;line-height:21.03px;height:19.89px;">performance of its obligations under this Agreement</div>
<div class="r" style="left:201.50px;top:434.50px;width:1.00px;height:17.40px;background:#333;"></div>
<div class="ln" style="left:126.10px;top:468.95px;line-height:21.83px;height:19.40px;">12. <i>Indemnification against Infringement.</i></div>
<div class="ln" style="left:201.50px;top:504.75px;line-height:21.83px;height:19.90px;">In performing services under this Agreement, Seller agrees not to design, develop,</div>
<div class="ln" style="left:201.50px;top:524.20px;line-height:21.83px;height:19.90px;">or provide to Buyer any items that infringe one or more patents, copyrights,</div>
<div class="ln" style="left:201.50px;top:543.65px;line-height:21.83px;height:19.90px;">trademarks or other intellectual property rights (including trade secrets), open</div>
<div class="ln" style="left:201.50px;top:563.10px;line-height:21.83px;height:19.45px;">source licenses, privacy, or other proprietary rights of any person or entity. If</div>
</div>
<div class="r" style="left:1223.20px;top:209.00px;width:17.00px;height:657.00px;background:#dbdbdb;"></div>
<div class="r" style="left:1223.30px;top:193.40px;width:15.70px;height:16.00px;background:#fff;border:1px solid #c4c4c4;box-sizing:border-box;border-radius:1.5px;"></div>
<svg class="r" style="left:1227.20px;top:198.60px;" width="8" height="5" viewBox="0 0 8 5"><path d="M0 4.5L4 0.5L8 4.5z" fill="#606060"/></svg>
<div class="r" style="left:1223.40px;top:383.20px;width:15.60px;height:44.40px;background:#fff;border:1px solid #c4c4c4;box-sizing:border-box;border-radius:1.5px;"></div>
<div class="r" style="left:1223.30px;top:865.20px;width:15.70px;height:16.00px;background:#fff;border:1px solid #c4c4c4;box-sizing:border-box;border-radius:1.5px;"></div>
<svg class="r" style="left:1227.20px;top:871.60px;" width="8" height="5" viewBox="0 0 8 5"><path d="M0 0.5L4 4.5L8 0.5z" fill="#606060"/></svg>
<!-- p_panel -->
<div class="r" style="left:1240.00px;top:168.50px;width:1.00px;height:710.00px;background:#c8c8c8;"></div>
<div class="t" style="left:1252.8px;top:181.26px;font-size:21.9px;color:#2b579a;font-family:'DejaVu Sans','Liberation Sans',sans-serif;font-weight:200;-webkit-text-stroke:0.3px #2b579a;transform-origin:0 0;transform:scaleX(0.8867);">Contract Assistant</div>
<svg class="r" style="left:1536.50px;top:186.50px;" width="10" height="6" viewBox="0 0 10 6"><path d="M0.3 0.5h9.4L5 5.3z" fill="#555"/></svg>
<svg class="r" style="left:1579.00px;top:183.50px;" width="12" height="12" viewBox="0 0 12 12"><path d="M1 1l9.6 9.6M10.6 1L1 10.6" stroke="#555" stroke-width="1.2" fill="none"/></svg>
<div class="r" style="left:1252.80px;top:214.50px;width:343.00px;height:654.20px;background:#fff;border-left:1px solid #cfcfcf;border-right:1px solid #dcdcdc;box-sizing:border-box;"></div>
<div class="r" style="left:1253.30px;top:214.40px;width:342.30px;height:46.80px;background:#5b5a58;"></div>
<div class="t" style="left:1270.60px;top:225.05px;font-size:16.60px;color:#fff;letter-spacing:-0.008px;-webkit-text-stroke:0.25px #fff;">Sale of Goods Template</div>
<div class="t" style="left:1270.60px;top:245.12px;font-size:11.20px;color:#fff;letter-spacing:0.073px;">Active • 97</div>
<div class="r" style="left:1555.00px;top:232.30px;width:25.00px;height:1.80px;background:#fff;"></div>
<div class="r" style="left:1555.00px;top:238.20px;width:25.00px;height:1.80px;background:#fff;"></div>
<div class="r" style="left:1555.00px;top:244.40px;width:25.00px;height:1.80px;background:#fff;"></div>
<div class="t" style="left:1312.50px;top:277.53px;font-size:13.20px;color:#555;letter-spacing:-0.089px;">Overview</div>
<div class="t" style="left:1497.60px;top:277.53px;font-size:13.20px;color:#222;letter-spacing:-0.296px;-webkit-text-stroke:0.3px #222;">Tags</div>
<div class="r" style="left:1433.00px;top:301.60px;width:155.30px;height:2.40px;background:#4a80d4;"></div>
<div class="r" style="left:1253.8px;top:304.5px;width:325px;height:518px;overflow:hidden;">
<div class="r" style="left:16.40px;top:-34.50px;width:291.60px;height:42.00px;border:1px solid #d2d0ce;box-sizing:border-box;box-shadow:0 0 2px rgba(0,0,0,.12);background:#fff;"></div>
<div class="r" style="left:16.40px;top:15.20px;width:291.60px;height:40.10px;border:1px solid #d2d0ce;box-sizing:border-box;box-shadow:0 0 2px rgba(0,0,0,.12);background:#fff;"></div>
<svg class="r" style="left:29.80px;top:27.90px;" width="9" height="13" viewBox="0 0 9 13"><path d="M1.5 1.2l5.4 5.3l-5.4 5.3" fill="none" stroke="#555" stroke-width="1.2"/></svg>
<svg class="r" style="left:47.60px;top:24.00px;" width="22" height="22" viewBox="0 0 22 22"><circle cx="11" cy="11" r="9.400" fill="#d4d4d4"/><path d="M6.800 8.300h8M10.400 8.300c0.400 3.400 1.600 5.200 4.400 5.600" fill="none" stroke="#3a3a3a" stroke-width="0.900"/><circle cx="6.800" cy="8.300" r="1.750" fill="#2b2b2b"/><circle cx="14.800" cy="8.300" r="1.750" fill="#2b2b2b"/><circle cx="14.800" cy="13.900" r="1.750" fill="#2b2b2b"/></svg>
<div class="t" style="left:74.30px;top:28.74px;font-size:13.30px;color:#444;letter-spacing:-0.198px;">Governing Law is New York</div>
<div class="r" style="left:291.50px;top:28.00px;width:2.30px;height:2.30px;background:#444;border-radius:50%;"></div>
<div class="r" style="left:291.50px;top:33.20px;width:2.30px;height:2.30px;background:#444;border-radius:50%;"></div>
<div class="r" style="left:291.50px;top:38.40px;width:2.30px;height:2.30px;background:#444;border-radius:50%;"></div>
<div class="r" style="left:16.40px;top:62.50px;width:291.60px;height:58.30px;border:1px solid #d2d0ce;box-sizing:border-box;box-shadow:0 0 2px rgba(0,0,0,.12);background:#fff;"></div>
<svg class="r" style="left:29.80px;top:75.20px;" width="9" height="13" viewBox="0 0 9 13"><path d="M1.5 1.2l5.4 5.3l-5.4 5.3" fill="none" stroke="#555" stroke-width="1.2"/></svg>
<svg class="r" style="left:47.60px;top:71.30px;" width="22" height="22" viewBox="0 0 22 22"><circle cx="11" cy="11" r="9.400" fill="#6cf4f5"/><rect x="5.600" y="7.200" width="10.800" height="7.700" rx="1.200" fill="#2e2a2c"/><path d="M7.600 8.600h2.200l1 1.200h1.600v3.400h-4.800z" fill="#3c9ea0"/></svg>
<div class="t" style="left:74.30px;top:76.04px;font-size:13.30px;color:#444;letter-spacing:0.146px;">Indemnification - Mutual</div>
<div class="t" style="left:74.30px;top:94.64px;font-size:13.30px;color:#444;letter-spacing:0.083px;">Indemnification</div>
<div class="r" style="left:291.50px;top:75.30px;width:2.30px;height:2.30px;background:#444;border-radius:50%;"></div>
<div class="r" style="left:291.50px;top:80.50px;width:2.30px;height:2.30px;background:#444;border-radius:50%;"></div>
<div class="r" style="left:291.50px;top:85.70px;width:2.30px;height:2.30px;background:#444;border-radius:50%;"></div>
<div class="r" style="left:16.40px;top:127.70px;width:291.60px;height:40.10px;border:1px solid #d2d0ce;box-sizing:border-box;box-shadow:0 0 2px rgba(0,0,0,.12);background:#fff;"></div>
<svg class="r" style="left:29.80px;top:140.40px;" width="9" height="13" viewBox="0 0 9 13"><path d="M1.5 1.2l5.4 5.3l-5.4 5.3" fill="none" stroke="#555" stroke-width="1.2"/></svg>
<svg class="r" style="left:47.60px;top:136.50px;" width="22" height="22" viewBox="0 0 22 22"><circle cx="11" cy="11" r="9.400" fill="#6cf4f5"/><rect x="5.600" y="7.200" width="10.800" height="7.700" rx="1.200" fill="#2e2a2c"/><path d="M7.600 8.600h2.200l1 1.200h1.600v3.400h-4.800z" fill="#3c9ea0"/></svg>
<div class="t" style="left:74.30px;top:141.24px;font-size:13.30px;color:#444;letter-spacing:-0.298px;">Basic Severability</div>
<div class="r" style="left:291.50px;top:140.50px;width:2.30px;height:2.30px;background:#444;border-radius:50%;"></div>
<div class="r" style="left:291.50px;top:145.70px;width:2.30px;height:2.30px;background:#444;border-radius:50%;"></div>
<div class="r" style="left:291.50px;top:150.90px;width:2.30px;height:2.30px;background:#444;border-radius:50%;"></div>
<div class="r" style="left:16.40px;top:175.10px;width:291.60px;height:40.10px;border:1px solid #d2d0ce;box-sizing:border-box;box-shadow:0 0 2px rgba(0,0,0,.12);background:#fff;"></div>
<svg class="r" style="left:29.80px;top:187.80px;" width="9" height="13" viewBox="0 0 9 13"><path d="M1.5 1.2l5.4 5.3l-5.4 5.3" fill="none" stroke="#555" stroke-width="1.2"/></svg>
<svg class="r" style="left:47.60px;top:183.90px;" width="22" height="22" viewBox="0 0 22 22"><circle cx="11" cy="11" r="9.400" fill="#6cf4f5"/><rect x="5.600" y="7.200" width="10.800" height="7.700" rx="1.200" fill="#2e2a2c"/><path d="M7.600 8.600h2.200l1 1.200h1.600v3.400h-4.800z" fill="#3c9ea0"/></svg>
<div class="t" style="left:74.30px;top:188.64px;font-size:13.30px;color:#444;letter-spacing:-0.129px;">Assignment</div>
<div class="r" style="left:291.50px;top:187.90px;width:2.30px;height:2.30px;background:#444;border-radius:50%;"></div>
<div class="r" style="left:291.50px;top:193.10px;width:2.30px;height:2.30px;background:#444;border-radius:50%;"></div>
<div class="r" style="left:291.50px;top:198.30px;width:2.30px;height:2.30px;background:#444;border-radius:50%;"></div>
<div class="r" style="left:16.40px;top:222.50px;width:291.60px;height:40.10px;border:1px solid #d2d0ce;box-sizing:border-box;box-shadow:0 0 2px rgba(0,0,0,.12);background:#fff;"></div>
<svg class="r" style="left:29.80px;top:235.20px;" width="9" height="13" viewBox="0 0 9 13"><path d="M1.5 1.2l5.4 5.3l-5.4 5.3" fill="none" stroke="#555" stroke-width="1.2"/></svg>
<svg class="r" style="left:47.60px;top:231.30px;" width="22" height="22" viewBox="0 0 22 22"><circle cx="11" cy="11" r="9.400" fill="#ec3df0"/><path d="M5.800 13.600l7.400-7.400l2.200 2.200l-7.400 7.400h-2.600z" fill="#2f3a2c"/><path d="M6.200 16.200h3.400c1.400-0.200 2.600-2.400 3.600-2.200c0.800 0.200 0.400 1.800 1.400 2.200c0.600 0.200 1.200-0.400 1.400-1" fill="none" stroke="#8a3a8c" stroke-width="0.800"/></svg>
<div class="t" style="left:74.30px;top:236.04px;font-size:13.30px;color:#444;letter-spacing:-0.226px;">Signature</div>
<div class="r" style="left:291.50px;top:235.30px;width:2.30px;height:2.30px;background:#444;border-radius:50%;"></div>
<div class="r" style="left:291.50px;top:240.50px;width:2.30px;height:2.30px;background:#444;border-radius:50%;"></div>
<div class="r" style="left:291.50px;top:245.70px;width:2.30px;height:2.30px;background:#444;border-radius:50%;"></div>
<div class="r" style="left:16.40px;top:269.90px;width:291.60px;height:40.10px;border:1px solid #d2d0ce;box-sizing:border-box;box-shadow:0 0 2px rgba(0,0,0,.12);background:#fff;"></div>
<svg class="r" style="left:29.80px;top:282.60px;" width="9" height="13" viewBox="0 0 9 13"><path d="M1.5 1.2l5.4 5.3l-5.4 5.3" fill="none" stroke="#555" stroke-width="1.2"/></svg>
<svg class="r" style="left:47.60px;top:278.70px;" width="22" height="22" viewBox="0 0 22 22"><circle cx="11" cy="11" r="9.500" fill="#fdfb5f"/><path d="M5 6.600l0.300 4.200l5.800 5.600a0.800 0.800 0 0 0 1.100 0l4.200-4.200a0.800 0.800 0 0 0 0-1.100l-5.800-5.200z" fill="#2e2e30"/><rect x="7" y="7.300" width="1.500" height="1.900" fill="#f3e64d"/></svg>
<div class="t" style="left:74.30px;top:283.44px;font-size:13.30px;color:#444;letter-spacing:-0.205px;">1st Party Signer Name</div>
<div class="r" style="left:291.50px;top:282.70px;width:2.30px;height:2.30px;background:#444;border-radius:50%;"></div>
<div class="r" style="left:291.50px;top:287.90px;width:2.30px;height:2.30px;background:#444;border-radius:50%;"></div>
<div class="r" style="left:291.50px;top:293.10px;width:2.30px;height:2.30px;background:#444;border-radius:50%;"></div>
<div class="r" style="left:16.40px;top:317.30px;width:291.60px;height:40.10px;border:1px solid #d2d0ce;box-sizing:border-box;box-shadow:0 0 2px rgba(0,0,0,.12);background:#fff;"></div>
<svg class="r" style="left:29.80px;top:330.00px;" width="9" height="13" viewBox="0 0 9 13"><path d="M1.5 1.2l5.4 5.3l-5.4 5.3" fill="none" stroke="#555" stroke-width="1.2"/></svg>
<svg class="r" style="left:47.60px;top:326.10px;" width="22" height="22" viewBox="0 0 22 22"><circle cx="11" cy="11" r="9.500" fill="#fdfb5f"/><path d="M5 6.600l0.300 4.200l5.800 5.600a0.800 0.800 0 0 0 1.100 0l4.200-4.200a0.800 0.800 0 0 0 0-1.100l-5.800-5.200z" fill="#2e2e30"/><rect x="7" y="7.300" width="1.500" height="1.900" fill="#f3e64d"/></svg>
<div class="t" style="left:74.30px;top:330.84px;font-size:13.30px;color:#444;letter-spacing:-0.164px;">1st Party Signer Title</div>
<div class="r" style="left:291.50px;top:330.10px;width:2.30px;height:2.30px;background:#444;border-radius:50%;"></div>
<div class="r" style="left:291.50px;top:335.30px;width:2.30px;height:2.30px;background:#444;border-radius:50%;"></div>
<div class="r" style="left:291.50px;top:340.50px;width:2.30px;height:2.30px;background:#444;border-radius:50%;"></div>
<div class="r" style="left:16.40px;top:364.70px;width:291.60px;height:40.10px;border:1px solid #d2d0ce;box-sizing:border-box;box-shadow:0 0 2px rgba(0,0,0,.12);background:#fff;"></div>
<svg class="r" style="left:29.80px;top:377.40px;" width="9" height="13" viewBox="0 0 9 13"><path d="M1.5 1.2l5.4 5.3l-5.4 5.3" fill="none" stroke="#555" stroke-width="1.2"/></svg>
<svg class="r" style="left:47.60px;top:373.50px;" width="22" height="22" viewBox="0 0 22 22"><circle cx="11" cy="11" r="9.500" fill="#fdfb5f"/><path d="M5 6.600l0.300 4.200l5.800 5.600a0.800 0.800 0 0 0 1.100 0l4.200-4.200a0.800 0.800 0 0 0 0-1.100l-5.800-5.200z" fill="#2e2e30"/><rect x="7" y="7.300" width="1.500" height="1.900" fill="#f3e64d"/></svg>
<div class="t" style="left:74.30px;top:378.24px;font-size:13.30px;color:#444;letter-spacing:-0.516px;">Company Name</div>
<div class="r" style="left:291.50px;top:377.50px;width:2.30px;height:2.30px;background:#444;border-radius:50%;"></div>
<div class="r" style="left:291.50px;top:382.70px;width:2.30px;height:2.30px;background:#444;border-radius:50%;"></div>
<div class="r" style="left:291.50px;top:387.90px;width:2.30px;height:2.30px;background:#444;border-radius:50%;"></div>
<div class="r" style="left:16.40px;top:412.10px;width:291.60px;height:40.10px;border:1px solid #d2d0ce;box-sizing:border-box;box-shadow:0 0 2px rgba(0,0,0,.12);background:#fff;"></div>
<svg class="r" style="left:29.80px;top:424.80px;" width="9" height="13" viewBox="0 0 9 13"><path d="M1.5 1.2l5.4 5.3l-5.4 5.3" fill="none" stroke="#555" stroke-width="1.2"/></svg>
<svg class="r" style="left:47.60px;top:420.90px;" width="22" height="22" viewBox="0 0 22 22"><circle cx="11" cy="11" r="9.500" fill="#fdfb5f"/><path d="M5 6.600l0.300 4.200l5.800 5.600a0.800 0.800 0 0 0 1.100 0l4.200-4.200a0.800 0.800 0 0 0 0-1.100l-5.800-5.200z" fill="#2e2e30"/><rect x="7" y="7.300" width="1.500" height="1.900" fill="#f3e64d"/></svg>
<div class="t" style="left:74.30px;top:425.64px;font-size:13.30px;color:#444;letter-spacing:-0.118px;">Effective Date</div>
<div class="r" style="left:291.50px;top:424.90px;width:2.30px;height:2.30px;background:#444;border-radius:50%;"></div>
<div class="r" style="left:291.50px;top:430.10px;width:2.30px;height:2.30px;background:#444;border-radius:50%;"></div>
<div class="r" style="left:291.50px;top:435.30px;width:2.30px;height:2.30px;background:#444;border-radius:50%;"></div>
<div class="r" style="left:16.40px;top:459.50px;width:291.60px;height:40.10px;border:1px solid #d2d0ce;box-sizing:border-box;box-shadow:0 0 2px rgba(0,0,0,.12);background:#fff;"></div>
<svg class="r" style="left:29.80px;top:472.20px;" width="9" height="13" viewBox="0 0 9 13"><path d="M1.5 1.2l5.4 5.3l-5.4 5.3" fill="none" stroke="#555" stroke-width="1.2"/></svg>
<svg class="r" style="left:47.60px;top:468.30px;" width="22" height="22" viewBox="0 0 22 22"><circle cx="11" cy="11" r="9.500" fill="#fdfb5f"/><path d="M5 6.600l0.300 4.200l5.800 5.600a0.800 0.800 0 0 0 1.100 0l4.200-4.200a0.800 0.800 0 0 0 0-1.100l-5.800-5.200z" fill="#2e2e30"/><rect x="7" y="7.300" width="1.500" height="1.900" fill="#f3e64d"/></svg>
<div class="t" style="left:74.30px;top:473.04px;font-size:13.30px;color:#444;letter-spacing:0.179px;">Company Job Title</div>
<div class="r" style="left:291.50px;top:472.30px;width:2.30px;height:2.30px;background:#444;border-radius:50%;"></div>
<div class="r" style="left:291.50px;top:477.50px;width:2.30px;height:2.30px;background:#444;border-radius:50%;"></div>
<div class="r" style="left:291.50px;top:482.70px;width:2.30px;height:2.30px;background:#444;border-radius:50%;"></div>
</div>
<div class="r" style="left:1579.00px;top:304.50px;width:16.50px;height:518.00px;background:#f1f1f1;"></div>
<svg class="r" style="left:1583.50px;top:311.50px;" width="8" height="5" viewBox="0 0 8 5"><path d="M0 4.5L4 0.5L8 4.5z" fill="#505050"/></svg>
<div class="r" style="left:1580.50px;top:575.00px;width:13.50px;height:229.00px;background:#c1c1c1;"></div>
<svg class="r" style="left:1583.50px;top:810.00px;" width="8" height="5" viewBox="0 0 8 5"><path d="M0 0.5L4 4.5L8 0.5z" fill="#505050"/></svg>
<div class="r" style="left:1253.30px;top:822.30px;width:342.30px;height:46.30px;background:#fff;border:1px solid #a3a2a0;box-sizing:border-box;"></div>
<div class="r" style="left:1253.30px;top:822.30px;width:172.50px;height:46.30px;background:#edebe9;border:1px solid #8a8886;border-top-color:#a3a2a0;border-bottom-color:#a3a2a0;box-sizing:border-box;"></div>
<div class="t" style="left:1318.00px;top:838.99px;font-size:13.60px;color:#333;letter-spacing:0.100px;-webkit-text-stroke:0.35px #333;">Add</div>
<svg class="r" style="left:1394.00px;top:842.00px;" width="14" height="9" viewBox="0 0 14 9"><path d="M1.3 1.3l5.5 5.4l5.5 -5.4" fill="none" stroke="#777" stroke-width="1.1"/></svg>
<div class="t" style="left:1497.00px;top:838.99px;font-size:13.60px;color:#333;letter-spacing:-0.875px;-webkit-text-stroke:0.35px #333;">Save</div>
<div class="r" style="left:1261.30px;top:675.40px;width:170.70px;height:135.80px;background:#fff;box-shadow:0 2px 8px rgba(0,0,0,.22),0 0 2px rgba(0,0,0,.12);"></div>
<svg class="r" style="left:1329.00px;top:811.00px;filter:drop-shadow(0 2px 2px rgba(0,0,0,.15));" width="26" height="11" viewBox="0 0 26 11"><path d="M1.5 0L13 10L24.5 0z" fill="#fff"/></svg>
<div class="r" style="left:1261.30px;top:743.20px;width:170.70px;height:34.00px;background:#f3f2f1;"></div>
<div class="t" style="left:1268.70px;top:685.84px;font-size:13.30px;color:#555;letter-spacing:0.100px;">Condition</div>
<div class="t" style="left:1268.70px;top:720.04px;font-size:13.30px;color:#555;letter-spacing:-0.152px;">Variable</div>
<div class="t" style="left:1268.70px;top:754.04px;font-size:13.30px;color:#555;letter-spacing:-0.484px;">Clause</div>
<div class="t" style="left:1268.70px;top:788.24px;font-size:13.30px;color:#555;letter-spacing:-0.126px;">Signature</div>
</div>
</body></html>
